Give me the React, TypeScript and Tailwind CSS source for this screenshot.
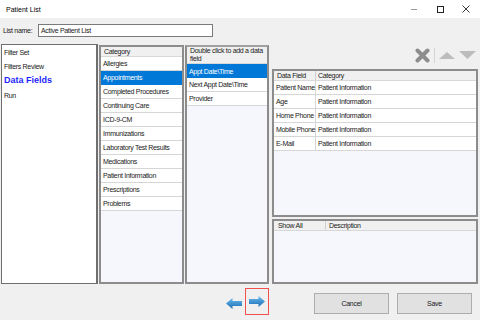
import React from "react";

const categories = [
  "Allergies",
  "Appointments",
  "Completed Procedures",
  "Continuing Care",
  "ICD-9-CM",
  "Immunizations",
  "Laboratory Test Results",
  "Medications",
  "Patient Information",
  "Prescriptions",
  "Problems",
];

const fields = ["Appt Date\\Time", "Next Appt Date\\Time", "Provider"];

const selected = [
  ["Patient Name", "Patient Information"],
  ["Age", "Patient Information"],
  ["Home Phone", "Patient Information"],
  ["Mobile Phone", "Patient Information"],
  ["E-Mail", "Patient Information"],
];

function Arrow({ dir }: { dir: "left" | "right" }) {
  const id = `grad-${dir}`;
  return (
    <svg width="16" height="11" viewBox="0 0 16 11">
      <defs>
        <linearGradient id={id} x1="0" y1="0" x2="0" y2="1">
          <stop offset="0" stopColor="#6cbcef" />
          <stop offset="1" stopColor="#1b6cb3" />
        </linearGradient>
      </defs>
      {dir === "left" ? (
        <polygon points="0,5.5 6.5,0 6.5,3 16,3 16,8 6.5,8 6.5,11" fill={`url(#${id})`} />
      ) : (
        <polygon points="16,5.5 9.5,0 9.5,3 0,3 0,8 9.5,8 9.5,11" fill={`url(#${id})`} />
      )}
    </svg>
  );
}

export default function App() {
  return (
    <div className="w-[480px] h-[320px] bg-[#f0f0f0] flex flex-col overflow-hidden font-['Liberation_Sans',sans-serif] text-[7px] tracking-[-0.3px] text-[#1a1a1a] leading-none whitespace-nowrap">
      {/* title bar */}
      <div className="h-[18px] bg-white flex items-center shrink-0">
        <span className="pl-[6px] text-[7px] tracking-normal text-black">Patient List</span>
        <div className="ml-auto flex items-center h-full">
          <div className="w-[26px] flex justify-center">
            <div className="w-[6px] h-px bg-[#9a9a9a]" />
          </div>
          <div className="w-[26px] flex justify-center">
            <div className="w-[7px] h-[7px] border border-[#222]" />
          </div>
          <div className="w-[26px] flex justify-center">
            <svg width="8" height="8" viewBox="0 0 8 8">
              <path d="M0.5 0.5 L7.5 7.5 M7.5 0.5 L0.5 7.5" stroke="#222" strokeWidth="0.9" />
            </svg>
          </div>
          <div className="w-[1px]" />
        </div>
      </div>

      {/* list name */}
      <div className="mt-[6px] h-[13px] flex items-center pl-[3px] shrink-0">
        <span className="w-[34px]">List name:</span>
        <div className="ml-px w-[175px] h-[13px] bg-white border border-[#7a7a7a] flex items-center pl-[2px]">
          Active Patient List
        </div>
      </div>

      {/* panels */}
      <div className="mt-[7px] h-[240px] flex pl-px shrink-0">
        <div className="w-[97px] h-full bg-white border border-[#6f6f6f] border-r-2 flex flex-col pl-[2px]">
          <div className="h-[14px] flex items-center">Filter Set</div>
          <div className="h-[14px] flex items-center">Filters Review</div>
          <div className="h-[15px] flex items-center text-[9px] tracking-normal font-bold text-[#1f1fff]">Data Fields</div>
          <div className="h-[14px] flex items-center">Run</div>
        </div>

        <div className="ml-[1px] w-[85px] mt-px h-[239px] bg-[#f5f7fc] border-2 border-[#8c8c8c] flex flex-col">
          <div className="h-[10px] bg-[#f0f0f0] border-b border-[#d8d8d8] flex items-center pl-[3px]">Category</div>
          {categories.map((c, i) => (
            <div
              key={c}
              className={
                i === 1
                  ? "h-[14px] flex items-center pl-[2px] bg-[#0078d7] text-white border-b border-[#0078d7]"
                  : "h-[14px] flex items-center pl-[2px] bg-white border-b-[1.5px] border-[#d6d6d6]"
              }
            >
              {c}
            </div>
          ))}
        </div>

        <div className="ml-px w-[84px] mt-px h-[239px] bg-[#f5f7fc] border-2 border-[#8c8c8c] border-t-[#a0a0a0] flex flex-col">
          <div className="h-[17px] bg-[#f0f0f0] border-b border-[#d8d8d8] flex flex-col justify-center pl-[3px] leading-[8px]">
            <span>Double click to add a data</span>
            <span>field</span>
          </div>
          {fields.map((f, i) => (
            <div
              key={f}
              className={
                i === 0
                  ? "h-[14px] flex items-center pl-[2px] bg-[#0078d7] text-white"
                  : "h-[14px] flex items-center pl-[2px] bg-white border-b-[1.5px] border-[#d6d6d6]"
              }
            >
              {f}
            </div>
          ))}
        </div>

        <div className="ml-[3px] w-[206px] h-full flex flex-col">
          <div className="h-[25px] flex items-start justify-end pt-[4px] pr-[2px]">
            <svg width="15" height="15" viewBox="0 0 15 15">
              <path d="M2.5 2.5 L12.5 12.5 M12.5 2.5 L2.5 12.5" stroke="#8d8d8d" strokeWidth="4" strokeLinecap="round" />
            </svg>
            <div className="ml-[4px] w-px h-[15px] bg-[#d4d4d4]" />
            <svg className="ml-[4px] mt-[4px]" width="16" height="7" viewBox="0 0 16 7">
              <polygon points="8,0 16,7 0,7" fill="#bdbdbd" />
            </svg>
            <svg className="ml-[4px] mt-[3px]" width="17" height="8" viewBox="0 0 17 8">
              <polygon points="0,0 17,0 8.5,8" fill="#bdbdbd" />
            </svg>
          </div>
          <div className="h-[148px] bg-[#f5f7fc] border-2 border-[#8c8c8c] flex flex-col">
            <div className="h-[10px] bg-[#f0f0f0] border-b border-[#d8d8d8] flex">
              <div className="w-[42px] border-r border-[#cfcfcf] flex items-center pl-[3px]">Data Field</div>
              <div className="flex-1 flex items-center pl-[2px]">Category</div>
            </div>
            {selected.map(([a, b]) => (
              <div key={a} className="h-[14px] flex bg-white border-b-[1.5px] border-[#d6d6d6]">
                <div className="w-[42px] border-r border-[#d6d6d6] flex items-center pl-[2px]">{a}</div>
                <div className="flex-1 flex items-center pl-[2px]">{b}</div>
              </div>
            ))}
          </div>
          <div className="mt-[2px] flex-1 bg-[#f5f7fc] border-2 border-[#8c8c8c] flex flex-col">
            <div className="h-[10px] bg-[#f0f0f0] border-b border-[#d8d8d8] flex">
              <div className="w-[52px] border-r border-[#cfcfcf] flex items-center pl-[4px]">Show All</div>
              <div className="flex-1 flex items-center pl-[3px]">Description</div>
            </div>
          </div>
        </div>
      </div>

      {/* bottom */}
      <div className="flex-1 flex items-start">
        <div className="ml-[226px] mt-[14px]">
          <Arrow dir="left" />
        </div>
        <div className="ml-[3px] mt-[4px] w-[24px] h-[27px] border border-[#f05050] flex items-center justify-center">
          <Arrow dir="right" />
        </div>
        <div className="ml-[45px] mt-[9px] w-[75px] h-[21px] bg-[#e1e1e1] border border-[#adadad] flex items-center justify-center">
          Cancel
        </div>
        <div className="ml-[8px] mt-[9px] w-[75px] h-[21px] bg-[#e1e1e1] border border-[#adadad] flex items-center justify-center">
          Save
        </div>
      </div>
    </div>
  );
}
